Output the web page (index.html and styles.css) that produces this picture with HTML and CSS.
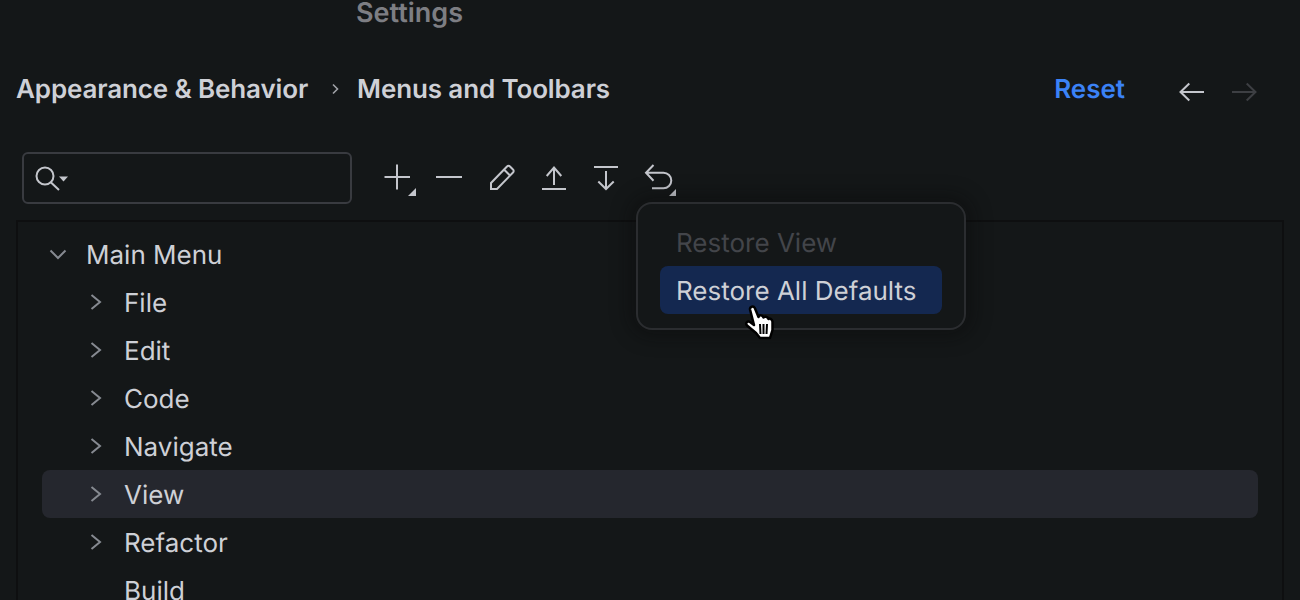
FILE: index.html
```html
<!DOCTYPE html>
<html lang="en">
<head>
    <meta charset="UTF-8">
    <title>Menus and Toolbars</title>
    <link rel="stylesheet" href="styles.css">
</head>
<body>

<div class="title-bar">Settings</div>

<div class="header">
    <span class="crumb">Appearance &amp; Behavior</span>
    <svg class="crumb-sep" width="14" height="14" viewBox="0 0 14 14"><path d="M5 2.5 L9.5 7 L5 11.5"/></svg>
    <span class="crumb">Menus and Toolbars</span>
    <a class="reset">Reset</a>
    <div class="nav">
        <svg class="icon" width="32" height="32" viewBox="0 0 32 32"><path d="M28 16 H5 M13.3 7.5 L4.5 16 L13.3 24.5"/></svg>
        <svg class="icon icon-off" width="32" height="32" viewBox="0 0 32 32"><path d="M4 16 H27 M18.7 7.5 L27.5 16 L18.7 24.5"/></svg>
    </div>
</div>

<div class="toolbar">
    <div class="search">
        <svg class="icon" width="40" height="32" viewBox="0 0 40 32">
            <circle cx="10" cy="14" r="8.5"/>
            <path d="M15.5 20 L24 28"/>
            <polygon class="tri" points="24,14.5 33,14.5 28.5,19.5"/>
        </svg>
    </div>
    <div class="tools">
        <button class="tool"><svg class="icon" width="40" height="40" viewBox="0 0 40 40"><path d="M6.5 19 H32 M19 6.5 V31.5"/><polygon class="tri" points="38,30 38,38 30,38"/></svg></button>
        <button class="tool"><svg class="icon" width="40" height="40" viewBox="0 0 40 40"><path d="M6 19 H32"/></svg></button>
        <button class="tool"><svg class="icon" width="40" height="40" viewBox="0 0 40 40"><path d="M9 31 V25 L25 8.5 a2 2 0 0 1 3 0 l3 3 a2 2 0 0 1 0 3 L15 31 Z M22 11.5 L28.5 18"/></svg></button>
        <button class="tool"><svg class="icon" width="40" height="40" viewBox="0 0 40 40"><path d="M8 31 H32 M20 27 V9.5 M12.7 18 L20 9.5 L27.3 18"/></svg></button>
        <button class="tool"><svg class="icon" width="40" height="40" viewBox="0 0 40 40"><path d="M8 9 H32 M20 13 V30 M12.3 23.5 L20 31 L27.7 23.5"/></svg></button>
        <button class="tool"><svg class="icon" width="40" height="40" viewBox="0 0 40 40"><path d="M9 14.7 H25.5 a7.8 7.8 0 0 1 0 15.6 H14 M15.5 7 L8 14.7 L15.5 22.7"/><polygon class="tri" points="38,31 38,38 31,38"/></svg></button>
    </div>
</div>

<div class="tree">
    <div class="row row-root">
        <svg class="arrow" width="24" height="24" viewBox="0 0 24 24"><path d="M4.5 8.5 L12 16 L19.5 8.5"/></svg>
        Main Menu
    </div>
    <div class="row"><svg class="arrow" width="24" height="24" viewBox="0 0 24 24"><path d="M7.5 5 L16 12 L7.5 19"/></svg>File</div>
    <div class="row"><svg class="arrow" width="24" height="24" viewBox="0 0 24 24"><path d="M7.5 5 L16 12 L7.5 19"/></svg>Edit</div>
    <div class="row"><svg class="arrow" width="24" height="24" viewBox="0 0 24 24"><path d="M7.5 5 L16 12 L7.5 19"/></svg>Code</div>
    <div class="row"><svg class="arrow" width="24" height="24" viewBox="0 0 24 24"><path d="M7.5 5 L16 12 L7.5 19"/></svg>Navigate</div>
    <div class="row row-selected"><svg class="arrow" width="24" height="24" viewBox="0 0 24 24"><path d="M7.5 5 L16 12 L7.5 19"/></svg>View</div>
    <div class="row"><svg class="arrow" width="24" height="24" viewBox="0 0 24 24"><path d="M7.5 5 L16 12 L7.5 19"/></svg>Refactor</div>
    <div class="row"><span class="no-arrow"></span>Build</div>
</div>

<div class="popup">
    <div class="popup-item popup-item-off">Restore View</div>
    <div class="popup-item popup-item-on">Restore All Defaults</div>
</div>

<svg class="cursor" width="40" height="44" viewBox="0 0 40 44">
    <path class="hand" d="M11 9.5 C10.5 6.5 14.5 5.5 15.8 8 L19.5 17 C20.5 14.5 23.5 15 24.5 17.5 C25.5 16 28.5 16.5 29.5 19 C30.5 18 33 19 33.5 21.5 L33.5 30 L31 38 L21 38 L17 33 L8 25.5 C6 23 8.5 20.5 11 22 L15 25 Z"/>
    <path class="hand-lines" d="M21 24 L21.5 34 M24.5 24 L24.5 34 M28 24 L27.5 34"/>
</svg>

</body>
</html>
```

FILE: styles.css
```css
html, body {
    margin: 0;
    height: 600px;
    overflow: hidden;
}
body {
    position: relative;
    background-color: #141718;
    color: #ced0d6;
    font-family: "Inter", "Liberation Sans", sans-serif;
    font-size: 26px;
    text-rendering: geometricPrecision;
}

.title-bar {
    height: 26px;
    padding-left: 356px;
    line-height: 26px;
    font-size: 27px;
    font-weight: 600;
    color: #7d7e83;
}

.header {
    display: flex;
    align-items: center;
    height: 48px;
    margin-top: 39px;
    padding: 0 40px 0 16px;
}
.crumb {
    font-weight: 600;
    letter-spacing: -0.13px;
}
.crumb-sep {
    margin: 0 15px 0 20px;
    fill: none;
    stroke: #a0a2a8;
    stroke-width: 1.6;
}
.reset {
    margin-left: auto;
    font-weight: 600;
    color: #3b82f6;
}
.nav {
    display: flex;
    gap: 20px;
    margin: 6px 0 0 51px;
}

.icon {
    display: block;
    fill: none;
    stroke: #c4c6cc;
    stroke-width: 2;
}
.icon-off {
    stroke: #3d3f43;
}
.tri {
    fill: #c4c6cc;
    stroke: none;
}

.toolbar {
    display: flex;
    align-items: center;
    margin-top: 39px;
    padding-left: 22px;
}
.search {
    display: flex;
    align-items: center;
    box-sizing: border-box;
    width: 330px;
    height: 52px;
    padding-left: 11px;
    border: 2px solid #393b40;
    border-radius: 6px;
}
.tools {
    display: flex;
    margin-left: 20px;
}
.tool {
    display: flex;
    justify-content: center;
    width: 52px;
    padding: 0;
    border: 0;
    background: none;
}

.tree {
    margin: 16px 16px 0;
    padding: 8px 24px 0;
    height: 400px;
    border: 2px solid #0e0f10;
}
.row {
    display: flex;
    align-items: center;
    gap: 16px;
    box-sizing: border-box;
    height: 48px;
    padding: 2px 0 0 42px;
    white-space: nowrap;
    border-radius: 8px;
}
.row-root {
    padding-left: 4px;
}
.row-selected {
    background-color: #25272e;
}
.arrow {
    margin-top: -2px;
    fill: none;
    stroke: #868a91;
    stroke-width: 2;
}
.no-arrow {
    width: 24px;
}

.popup {
    position: absolute;
    left: 636px;
    top: 202px;
    box-sizing: border-box;
    width: 330px;
    height: 128px;
    padding: 14px 22px;
    background-color: #141718;
    border: 2px solid #2b2d30;
    border-radius: 16px;
    box-shadow: 0 0 18px 8px rgba(8, 8, 10, 0.35);
}
.popup-item {
    height: 48px;
    padding-left: 16px;
    line-height: 52px;
    border-radius: 8px;
}
.popup-item-off {
    color: #43454a;
}
.popup-item-on {
    background-color: #142850;
}

.cursor {
    position: absolute;
    left: 739px;
    top: 300px;
}
.hand {
    fill: #fff;
    stroke: #000;
    stroke-width: 2.5;
    stroke-linejoin: round;
}
.hand-lines {
    fill: none;
    stroke: #000;
    stroke-width: 2;
}
```
